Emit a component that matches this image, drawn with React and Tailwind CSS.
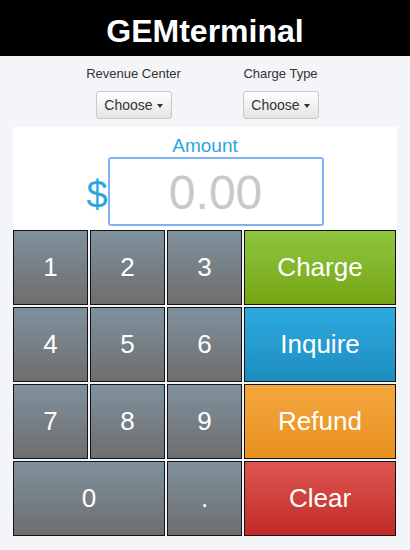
import React from "react";

const font = { fontFamily: '"Liberation Sans", Arial, Helvetica, sans-serif' };

function Caret() {
  return <span className="ml-[4px] inline-block w-0 h-0 border-l-[3.5px] border-r-[3.5px] border-t-[4px] border-l-transparent border-r-transparent border-t-[#333] translate-y-[1px]" />;
}

function Choose() {
  return (
    <div className="w-[76px] h-[28px] flex items-center justify-center rounded-[3px] border border-[#c8c8c8] bg-linear-to-b from-[#ffffff] to-[#e4e4e4] text-[14px] text-[#333] shadow-[inset_0_1px_0_rgba(255,255,255,0.6)]">
      Choose<Caret />
    </div>
  );
}

const grey = "bg-linear-to-b from-[#7f919e] to-[#6e6e6e]";

function Key({ label, cls = grey, span = "" }) {
  return (
    <div className={`border border-[#141414] ${cls} ${span} flex items-center justify-center text-white text-[26px]`}>
      {label}
    </div>
  );
}

export default function App() {
  return (
    <div className="w-[410px] h-[550px] bg-[#f4f5f9] overflow-hidden" style={font}>
      <div className="h-[56px] bg-black flex items-center justify-center pt-[5px]">
        <span className="text-white text-[32px] font-bold">GEMterminal</span>
      </div>
      <div className="flex pl-[60px] pt-[10px]">
        <div className="w-[147px] flex flex-col items-center">
          <div className="text-[13px] leading-[16px] text-[#333]">Revenue Center</div>
          <div className="mt-[9px]"><Choose /></div>
        </div>
        <div className="w-[147px] flex flex-col items-center">
          <div className="text-[13px] leading-[16px] text-[#333]">Charge Type</div>
          <div className="mt-[9px]"><Choose /></div>
        </div>
      </div>
      <div className="mt-[8px] ml-[13px] w-[384px] bg-white pt-[8px]">
        <div className="text-center text-[19px] leading-[22px] text-[#2aa6de]">Amount</div>
        <div className="flex justify-center items-center">
          <span className="text-[38px] leading-none text-[#2aa6de] mt-[6px]">$</span>
          <div className="w-[216px] h-[69px] border-2 border-[#80b1f5] rounded-[3px] flex items-center justify-center text-[48px] text-[#c8c8c8] pt-[2px]">
            0.00
          </div>
        </div>
        <div className="mt-[4px] grid grid-cols-[75px_75px_75px_152px] grid-rows-[75px_75px_75px_75px] gap-[2px] bg-[#f4f5f9]">
          <Key label="1" />
          <Key label="2" />
          <Key label="3" />
          <Key label="Charge" cls="bg-linear-to-b from-[#8ec63f] to-[#76a511]" />
          <Key label="4" />
          <Key label="5" />
          <Key label="6" />
          <Key label="Inquire" cls="bg-linear-to-b from-[#2eaae0] to-[#1d8dbf]" />
          <Key label="7" />
          <Key label="8" />
          <Key label="9" />
          <Key label="Refund" cls="bg-linear-to-b from-[#f4a63e] to-[#e8911c]" />
          <Key label="0" span="col-span-2" />
          <Key label="." />
          <Key label="Clear" cls="bg-linear-to-b from-[#dd5551] to-[#c12a26]" />
        </div>
      </div>
    </div>
  );
}
